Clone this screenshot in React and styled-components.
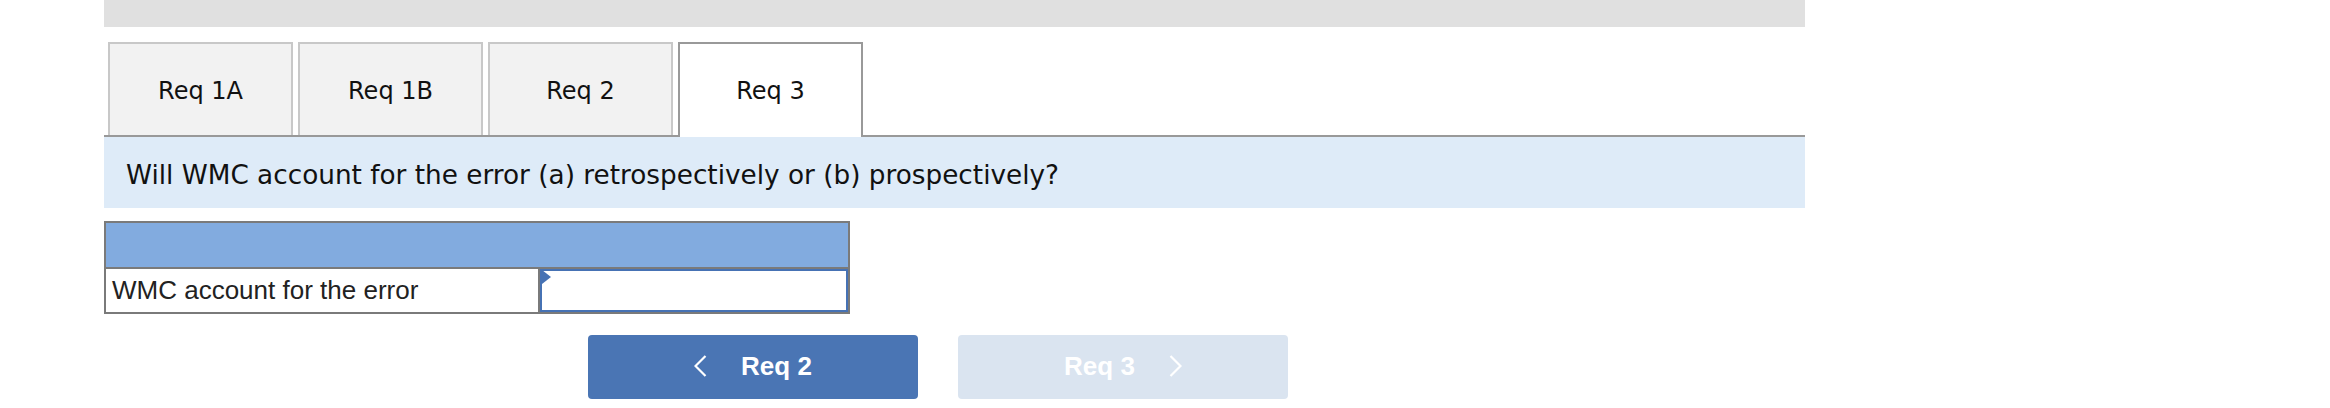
import React from 'react'
import styled, { createGlobalStyle } from 'styled-components'

const GlobalStyle = createGlobalStyle`
  html, body {
    margin: 0;
    padding: 0;
    background: #ffffff;
  }
`

const Page = styled.div`
  width: 1701px;
  padding-left: 104px;
`

const TopBar = styled.div`
  height: 27px;
  background: #e0e0e0;
`

const TabRow = styled.div`
  display: flex;
  align-items: flex-end;
  gap: 5px;
  margin-top: 14.5px;
  padding-left: 4px;
  border-bottom: 2px solid #999999;
`

const Tab = styled.div`
  box-sizing: border-box;
  width: 185px;
  height: ${p => (p.$active ? '95.5px' : '93.5px')};
  margin-bottom: ${p => (p.$active ? '-2px' : '0')};
  padding-top: ${p => (p.$active ? '2px' : '4px')};
  display: flex;
  align-items: center;
  justify-content: center;
  border: 2px solid ${p => (p.$active ? '#999999' : '#c8c8c8')};
  border-bottom: none;
  background: ${p => (p.$active ? '#ffffff' : '#f2f2f2')};
  font-family: "DejaVu Sans", Verdana, sans-serif;
  font-size: 24px;
  color: #111111;
`

const Question = styled.div`
  box-sizing: border-box;
  height: 70.7px;
  padding: 5px 0 0 22px;
  display: flex;
  align-items: center;
  background: #deebf8;
  font-family: "DejaVu Sans", Verdana, sans-serif;
  font-size: 26.3px;
  color: #111111;
`

const Table = styled.div`
  box-sizing: border-box;
  width: 746px;
  margin-top: 13.3px;
  display: grid;
  grid-template-columns: 434px 1fr;
  border: 2px solid #7a7a7a;
`

const HeaderCell = styled.div`
  grid-column: 1 / span 2;
  height: 44px;
  background: #82abdf;
  border-bottom: 2px solid #7a7a7a;
`

const LabelCell = styled.div`
  box-sizing: border-box;
  height: 43px;
  padding: 1px 0 0 6px;
  display: flex;
  align-items: center;
  border-right: 2px solid #7a7a7a;
  font-family: "Liberation Sans", Arial, sans-serif;
  font-size: 26px;
  color: #222222;
`

const InputCell = styled.div`
  position: relative;
  height: 43px;
`

const AnswerBox = styled.input`
  box-sizing: border-box;
  display: block;
  width: 100%;
  height: 100%;
  margin: 0;
  border: 2px solid #4672b4;
  background: #ffffff;
  outline: none;
`

const Marker = styled.span`
  position: absolute;
  top: 1px;
  left: 2px;
  width: 0;
  height: 0;
  border-left: 9px solid #4672b4;
  border-top: 7px solid transparent;
  border-bottom: 7px solid transparent;
`

const NavRow = styled.div`
  display: flex;
  gap: 40px;
  margin-top: 21px;
  padding-left: 484px;
`

const NavButton = styled.button`
  box-sizing: border-box;
  width: 330px;
  height: 64px;
  border: none;
  border-radius: 4px;
  padding: 0;
  display: flex;
  align-items: center;
  justify-content: center;
  gap: 34px;
  background: ${p => (p.disabled ? '#dae4f0' : '#4a75b4')};
  color: #ffffff;
  font-family: "Liberation Sans", Arial, sans-serif;
  font-weight: bold;
  font-size: 26px;
  cursor: ${p => (p.disabled ? 'default' : 'pointer')};
`

const Chevron = ({ dir }) => (
  <svg width="13" height="22" viewBox="0 0 13 22" style={{ marginTop: '-2px' }}>
    <polyline
      points={dir === 'left' ? '11.5,1 1.5,11 11.5,21' : '1.5,1 11.5,11 1.5,21'}
      fill="none"
      stroke="#ffffff"
      strokeWidth="2.2"
    />
  </svg>
)

const tabs = ['Req 1A', 'Req 1B', 'Req 2', 'Req 3']

export default function App() {
  return (
    <>
      <GlobalStyle />
      <Page>
        <TopBar />
        <TabRow>
          {tabs.map(t => (
            <Tab key={t} $active={t === 'Req 3'}>{t}</Tab>
          ))}
        </TabRow>
        <Question>
          Will WMC account for the error (a) retrospectively or (b) prospectively?
        </Question>
        <Table>
          <HeaderCell />
          <LabelCell>WMC account for the error</LabelCell>
          <InputCell>
            <AnswerBox type="text" />
            <Marker />
          </InputCell>
        </Table>
        <NavRow>
          <NavButton>
            <Chevron dir="left" />
            <span>Req 2</span>
          </NavButton>
          <NavButton disabled>
            <span>Req 3</span>
            <Chevron dir="right" />
          </NavButton>
        </NavRow>
      </Page>
    </>
  )
}
